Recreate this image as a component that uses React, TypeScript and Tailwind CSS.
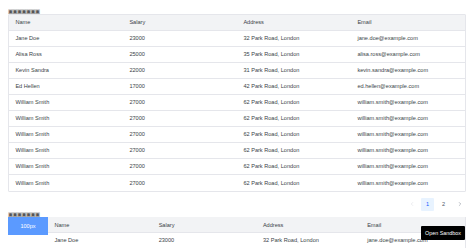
import { ChevronLeft, ChevronRight } from "lucide-react";

type Row = { name: string; salary: number; address: string; email: string };

const rows: Row[] = [
  { name: "Jane Doe", salary: 23000, address: "32 Park Road, London", email: "jane.doe@example.com" },
  { name: "Alisa Ross", salary: 25000, address: "35 Park Road, London", email: "alisa.ross@example.com" },
  { name: "Kevin Sandra", salary: 22000, address: "31 Park Road, London", email: "kevin.sandra@example.com" },
  { name: "Ed Hellen", salary: 17000, address: "42 Park Road, London", email: "ed.hellen@example.com" },
  ...Array.from({ length: 6 }, () => ({
    name: "William Smith",
    salary: 27000,
    address: "62 Park Road, London",
    email: "william.smith@example.com",
  })),
];

const cols = ["Name", "Salary", "Address", "Email"];

function Title() {
  return (
    <div className="h-[6px] leading-[6px] text-[5.4px] text-[#555] tracking-[-0.6px] font-['DejaVu_Sans',sans-serif] select-none">
      ▣▣▣▣▣▣▣
    </div>
  );
}

function Cells({ r }: { r: Row }) {
  return (
    <>
      <div className="px-[6.4px] truncate">{r.name}</div>
      <div className="px-[6.4px] truncate">{r.salary}</div>
      <div className="px-[6.4px] truncate">{r.address}</div>
      <div className="px-[6.4px] truncate">{r.email}</div>
    </>
  );
}

function Pagination() {
  return (
    <div className="flex justify-end items-center gap-[3.2px] mt-[6px] h-[13px] text-[5.6px]">
      <div className="w-[12.8px] h-[12.8px] flex items-center justify-center text-[#c9cdd4]">
        <ChevronLeft size={6} strokeWidth={1.5} />
      </div>
      <div className="w-[12.8px] h-[12.8px] flex items-center justify-center rounded-[1px] bg-[#e8f3ff] text-[#165dff]">1</div>
      <div className="w-[12.8px] h-[12.8px] flex items-center justify-center text-[#4e5969]">2</div>
      <div className="w-[12.8px] h-[12.8px] flex items-center justify-center text-[#4e5969]">
        <ChevronRight size={6} strokeWidth={1.5} />
      </div>
    </div>
  );
}

export default function App() {
  return (
    <div className="relative px-2 pt-2 bg-white text-[5.6px] text-[#3a3f48] font-['Liberation_Sans',Arial,sans-serif] h-[248px] overflow-hidden">
      <Title />
      <div className="border border-[#e5e6eb] rounded-[1px]">
        <div className="grid grid-cols-4 h-4 items-center bg-[#f2f3f5] border-b border-[#e5e6eb]">
          {cols.map((c) => (
            <div key={c} className="px-[6.4px]">{c}</div>
          ))}
        </div>
        {rows.map((r, i) => (
          <div
            key={i}
            className={`grid grid-cols-4 h-4 items-center ${i < rows.length - 1 ? "border-b border-[#e5e6eb]" : ""}`}
          >
            <Cells r={r} />
          </div>
        ))}
      </div>

      <Pagination />

      <Title />
      <div className="border-r border-[#e5e6eb]">
        <div className="grid grid-cols-[40px_1fr_1fr_1fr_1fr] h-4 items-center bg-[#f2f3f5] border-b border-[#e5e6eb]">
          <div className="relative self-start h-4">
            <div className="absolute inset-x-0 top-0 h-[18px] bg-[#5b9aff] text-white flex items-center justify-center">100px</div>
          </div>
          {cols.map((c) => (
            <div key={c} className="px-[6.4px]">{c}</div>
          ))}
        </div>
        {rows.slice(0, 2).map((r, i) => (
          <div key={i} className="grid grid-cols-[40px_1fr_1fr_1fr_1fr] h-4 items-center border-b border-[#e5e6eb]">
            <div />
            <Cells r={r} />
          </div>
        ))}
      </div>

      <div className="absolute left-[421px] top-[226px] w-[44px] h-[14px] flex items-center justify-center rounded-[1px] bg-black text-white text-[5.4px]">
        Open Sandbox
      </div>
    </div>
  );
}
